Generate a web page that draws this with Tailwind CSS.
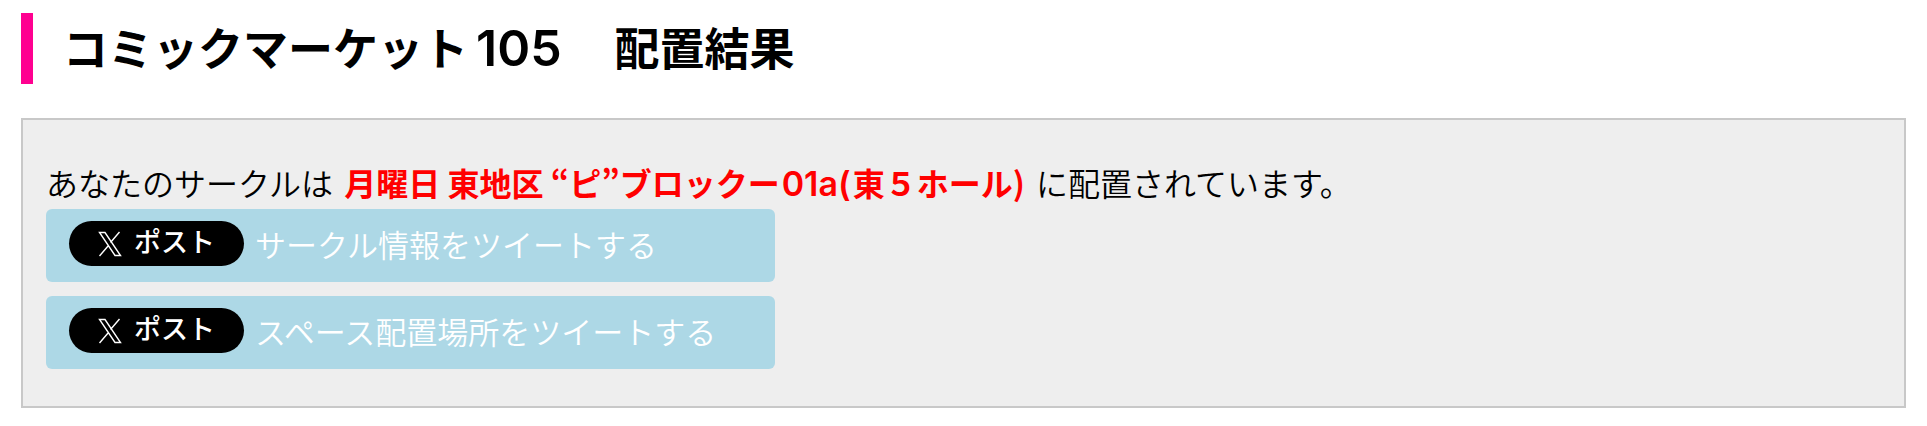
<!DOCTYPE html>
<html lang="ja">

<head>
    <meta charset="UTF-8">
    <meta name="viewport" content="width=device-width, initial-scale=1.0">
    <title>コミックマーケット105 配置結果</title>
    <script src="https://cdn.jsdelivr.net/npm/@tailwindcss/browser@4"></script>
</head>

<body class="bg-white text-black font-['Noto_Sans_CJK_JP',sans-serif]">
    <main class="px-[21px] pt-[13px]">
        <h1 class="border-l-12 border-[#ff0090] pl-[30px] pb-1 text-[45px] leading-[67px] font-bold">コミックマーケット<span
                class="mx-2 font-[family-name:Inter] text-[50px] leading-none font-semibold">105</span>　配置結果</h1>

        <section class="mt-[34px] border-2 border-[#c8c8c8] bg-[#eee] px-[23px] pt-[38px] pb-[37px]">
            <p class="pb-0.5 text-[32px] leading-[49px] font-[350]">あなたのサークルは <strong class="mx-1 font-bold text-[#f00]">月曜日 東地区 “ピ”ブロックー<span
                        class="mx-0.5 font-[family-name:Inter] text-[34px] leading-none font-semibold">01a(</span>東５ホール)</strong> に配置されています。</p>

            <div class="flex flex-col gap-[14px]">
                <a href="#" class="flex w-[729px] max-w-full items-start rounded-md bg-[#add8e6] px-[23px] pt-3 pb-[15px] text-white">
                    <span class="flex h-[45px] w-[175px] items-center justify-center gap-3 rounded-full bg-black">
                        <svg class="h-[26px] w-6" viewBox="0 0 24 26" fill="none" stroke="currentColor" stroke-width="1.4" aria-hidden="true">
                            <path d="M1.500 1.500h5.500L22.500 24.500h-5.500zM21.500 1l-9 10.500M10.500 14.500L1.500 25" />
                        </svg>
                        <span class="pb-1.5 text-[27px] leading-[39px] font-medium">ポスト</span>
                    </span>
                    <span class="ml-[11px] text-[31px] leading-[46px] font-[350]">サークル情報をツイートする</span>
                </a>
                <a href="#" class="flex w-[729px] max-w-full items-start rounded-md bg-[#add8e6] px-[23px] pt-3 pb-[15px] text-white">
                    <span class="flex h-[45px] w-[175px] items-center justify-center gap-3 rounded-full bg-black">
                        <svg class="h-[26px] w-6" viewBox="0 0 24 26" fill="none" stroke="currentColor" stroke-width="1.4" aria-hidden="true">
                            <path d="M1.500 1.500h5.500L22.500 24.500h-5.500zM21.500 1l-9 10.500M10.500 14.500L1.500 25" />
                        </svg>
                        <span class="pb-1.5 text-[27px] leading-[39px] font-medium">ポスト</span>
                    </span>
                    <span class="ml-[11px] text-[31px] leading-[46px] font-[350]">スペース配置場所をツイートする</span>
                </a>
            </div>
        </section>
    </main>
</body>

</html>
